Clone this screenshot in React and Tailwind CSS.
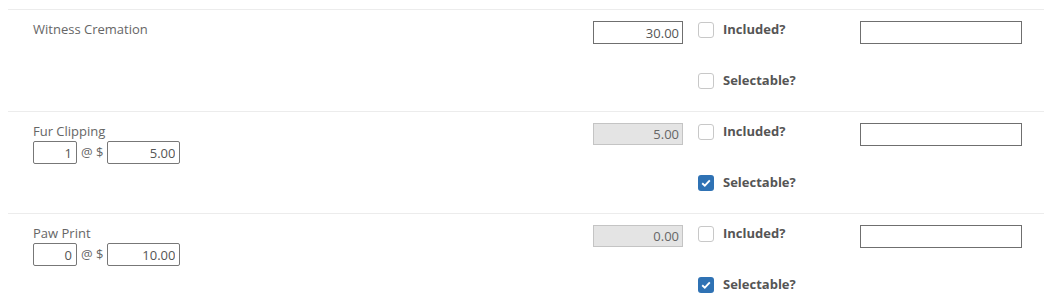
import React from "react";

const rows = [
  { name: "Witness Cremation", total: "30.00", readOnly: false, qty: null, price: null, included: false, selectable: false },
  { name: "Fur Clipping", total: "5.00", readOnly: true, qty: "1", price: "5.00", included: false, selectable: true },
  { name: "Paw Print", total: "0.00", readOnly: true, qty: "0", price: "10.00", included: false, selectable: true },
];

function Check({ checked }) {
  if (checked) {
    return (
      <span className="flex h-4 w-4 items-center justify-center rounded-[3px] bg-[#2f72b4]">
        <svg width="10" height="8" viewBox="0 0 10 8">
          <path d="M1.2 4.2 L3.8 6.6 L8.8 1.4" fill="none" stroke="#fff" strokeWidth="1.9" />
        </svg>
      </span>
    );
  }
  return <span className="block h-4 w-4 rounded-[3px] border border-[#c8c8c8] bg-white" />;
}

function ServiceRow({ row }) {
  return (
    <div className="flex h-[102px] border-t border-[#ececec]">
      <div className="w-[585px] pl-[25px] pt-[10px]">
        <div className="leading-[18px]">{row.name}</div>
        {row.qty !== null && (
          <div className="mt-px flex items-center">
            <input
              readOnly
              value={row.qty}
              className="h-[23px] w-[44px] rounded-[2px] border border-[#777] pr-1 text-right text-[#555] outline-none"
            />
            <span className="mx-1">@ $</span>
            <input
              readOnly
              value={row.price}
              className="h-[23px] w-[73px] rounded-[2px] border border-[#777] pr-1 text-right text-[#555] outline-none"
            />
          </div>
        )}
      </div>
      <div className="pt-[11px]">
        <input
          readOnly
          value={row.total}
          className={
            row.readOnly
              ? "h-[22px] w-[90px] border border-[#c4c4c4] bg-[#e4e4e4] pr-[3px] text-right text-[#666] outline-none"
              : "h-[23px] w-[90px] border border-[#6f6f6f] bg-white pr-[3px] text-right text-[#555] outline-none"
          }
        />
      </div>
      <div className="ml-[15px] w-[162px] pt-[11px] font-bold text-[#555]">
        <label className="flex h-[18px] items-center gap-[9px]">
          <Check checked={row.included} />
          Included?
        </label>
        <label className="mt-[33px] flex h-[18px] items-center gap-[9px]">
          <Check checked={row.selectable} />
          Selectable?
        </label>
      </div>
      <div className="pt-[11px]">
        <input
          readOnly
          value=""
          className="h-[23px] w-[162px] border border-[#6f6f6f] bg-white outline-none"
        />
      </div>
    </div>
  );
}

export default function App() {
  return (
    <div className="h-[304px] bg-white px-2 pt-[9px] text-[13px] text-[#666]" style={{ fontFamily: '"Open Sans", sans-serif' }}>
      {rows.map((row) => (
        <ServiceRow key={row.name} row={row} />
      ))}
    </div>
  );
}
